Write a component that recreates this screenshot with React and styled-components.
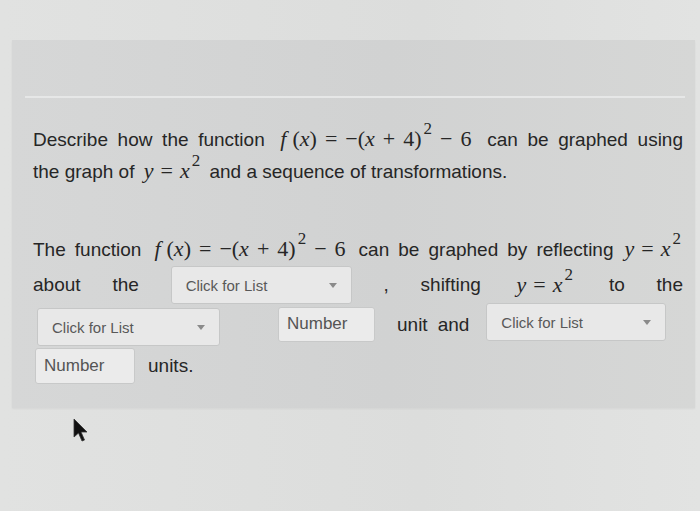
import React from "react";
import styled, { createGlobalStyle } from "styled-components";

const GlobalStyle = createGlobalStyle`
  html, body {
    margin: 0;
    padding: 0;
    background: #dedfde;
  }
  body {
    font-family: "Liberation Sans", Arial, sans-serif;
    color: #262626;
  }
`;

const Page = styled.div`
  position: relative;
  width: 700px;
  height: 511px;
  box-sizing: border-box;
  padding: 40px 5px 0 12px;
  overflow: hidden;
  background: linear-gradient(90deg, #e1e2e1 0%, #dcdddc 60%, #e2e3e2 100%);
`;

const Panel = styled.div`
  height: 368px;
  background: linear-gradient(90deg, #d6d7d7 0%, #d1d2d2 55%, #d6d7d6 100%);
  box-shadow: 0 1px 2px rgba(0, 0, 0, 0.05);
`;

const TopStrip = styled.div`
  height: 56px;
  margin: 0 10px 0 13px;
  border-bottom: 2px solid #e6e7e7;
`;

const Content = styled.div`
  padding: 25px 12px 0 21px;
  font-size: 19px;
`;

const Line = styled.div`
  height: ${(p) => p.h || 32}px;
  line-height: ${(p) => p.h || 32}px;
  white-space: nowrap;
  text-align: ${(p) => (p.justify ? "justify" : "left")};
  text-align-last: ${(p) => (p.justify ? "justify" : "left")};
`;

const Para = styled.div`
  margin-top: ${(p) => p.top || 0}px;
`;

const Row = styled.div`
  display: flex;
  align-items: center;
  height: ${(p) => p.h}px;
  justify-content: ${(p) => (p.spread ? "space-between" : "flex-start")};
  padding-left: ${(p) => p.indent || 0}px;
`;

const Math = styled.span`
  font-family: "Liberation Serif", "Times New Roman", serif;
  font-size: 22px;
  margin: 0 ${(p) => p.space || 4}px;
  white-space: nowrap;
`;

const V = styled.i`
  font-style: italic;
  margin-right: ${(p) => p.mr || 0}px;
`;

const Op = styled.span`
  margin: 0 ${(p) => p.m || 8}px;
`;

const Sup = styled.span`
  font-size: 17px;
  position: relative;
  top: -12px;
  margin-left: 2px;
  line-height: 0;
`;

const Select = styled.div`
  display: flex;
  align-items: center;
  justify-content: space-between;
  box-sizing: border-box;
  width: ${(p) => p.w || 181}px;
  height: ${(p) => p.h || 38}px;
  padding: 0 14px 0 14px;
  background: #e8e8e8;
  border: 1px solid #c6c7c7;
  border-radius: 3px;
  color: #585858;
  font-size: 15px;
  margin-top: ${(p) => p.dy || 0}px;
`;

const Caret = styled.span`
  width: 0;
  height: 0;
  border-left: 4px solid transparent;
  border-right: 4px solid transparent;
  border-top: 5px solid #8a8a8a;
`;

const NumberBox = styled.div`
  display: flex;
  align-items: center;
  box-sizing: border-box;
  width: ${(p) => p.w || 97}px;
  height: ${(p) => p.h || 35}px;
  padding-left: 8px;
  background: #ebebeb;
  border: 1px solid #c8c9c9;
  border-radius: 3px;
  color: #555;
  font-size: 17px;
  margin-top: ${(p) => p.dy || 0}px;
`;

const Word = styled.span`
  margin-left: ${(p) => p.ml || 0}px;
`;

const Cursor = styled.svg`
  position: absolute;
  left: 73px;
  top: 418px;
`;

const Choice = ({ w, dy }) => (
  <Select w={w} dy={dy}>
    <span>Click for List</span>
    <Caret />
  </Select>
);

const Fx = ({ space }) => (
  <Math space={space}>
    <V mr={6}>f</V>(<V>x</V>)<Op>=</Op>−(<V>x</V>
    <Op>+</Op>4)<Sup>2</Sup>
    <Op>−</Op>6
  </Math>
);

const YX = ({ space }) => (
  <Math space={space}>
    <V>y</V>
    <Op m={7}>=</Op>
    <V>x</V>
    <Sup>2</Sup>
  </Math>
);

export default function App() {
  return (
    <Page>
      <GlobalStyle />
      <Panel>
        <TopStrip />
        <Content>
          <Para>
            <Line justify>
              Describe how the function <Fx space={6} /> can be graphed using
            </Line>
            <Line>
              the graph of <YX /> and a sequence of transformations.
            </Line>
          </Para>
          <Para top={46}>
            <Line justify>
              The function <Fx /> can be graphed by reflecting <YX space={2} />
            </Line>
            <Row h={40} spread>
              <span>about</span>
              <span>the</span>
              <Choice w={181} />
              <span>,</span>
              <span>shifting</span>
              <YX />
              <span>to</span>
              <span>the</span>
            </Row>
            <Row h={40} indent={4}>
              <Choice w={183} dy={4} />
              <Word ml={58}>
                <NumberBox dy={-2}>Number</NumberBox>
              </Word>
              <Word ml={22}>unit</Word>
              <Word ml={10}>and</Word>
              <Word ml={17}>
                <Choice w={180} dy={-6} />
              </Word>
            </Row>
            <Row h={42} indent={2}>
              <NumberBox w={100} h={36}>
                Number
              </NumberBox>
              <Word ml={13}>units.</Word>
            </Row>
          </Para>
        </Content>
      </Panel>
      <Cursor width="16" height="24" viewBox="0 0 16 24">
        <path d="M1 1 L1 19 L5.5 15 L9 23 L11.5 22 L8 14 L14 14 Z" fill="#111" stroke="#333" strokeWidth="0.8" />
      </Cursor>
    </Page>
  );
}
